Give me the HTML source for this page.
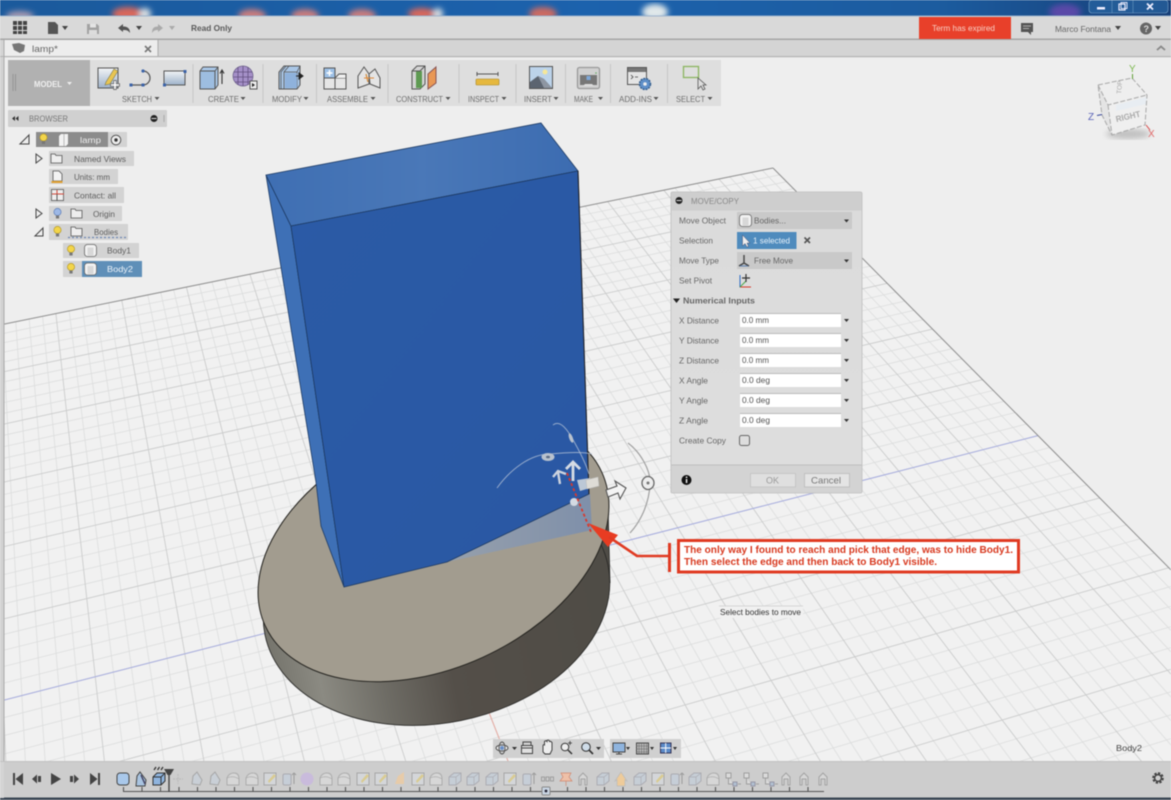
<!DOCTYPE html>
<html><head><meta charset="utf-8"><title>lamp</title>
<style>
html,body{margin:0;padding:0;width:1171px;height:800px;overflow:hidden;background:#eee}
svg{display:block;filter:blur(.42px)}
text{font-family:"Liberation Sans",sans-serif;font-size:8.5px;fill:#666}
.l{font-size:8px;fill:#6e6e6e}
.t{font-size:8.5px;fill:#5e5e5e}
.d{font-size:8.5px;fill:#666}
.v{font-size:8.5px;fill:#555}
.rd{font-size:10.5px;font-weight:bold;fill:#d8391f}
</style></head><body>
<svg id="s" xmlns="http://www.w3.org/2000/svg" width="1171" height="800" viewBox="0 0 1171 800">
<defs>
<linearGradient id="wp" x1="0" x2="1" y1="0" y2="0"><stop offset="0" stop-color="#1b5a9c"/><stop offset=".5" stop-color="#1c62ad"/><stop offset=".8" stop-color="#1c5c9f"/><stop offset="1" stop-color="#173f78"/></linearGradient>
<linearGradient id="top" x1="0" x2="1" y1="0" y2="0"><stop offset="0" stop-color="#3f6fb3"/><stop offset=".5" stop-color="#4a78b8"/><stop offset="1" stop-color="#3c6cb1"/></linearGradient>
<linearGradient id="front" x1="0" x2="1" y1="0" y2="1"><stop offset="0" stop-color="#2b5ba6"/><stop offset="1" stop-color="#2a58a4"/></linearGradient>
<linearGradient id="side" x1="265" x2="610" y1="0" y2="0" gradientUnits="userSpaceOnUse"><stop offset="0" stop-color="#77766e"/><stop offset=".12" stop-color="#8b8a82"/><stop offset=".3" stop-color="#6e6c65"/><stop offset=".5" stop-color="#544f49"/><stop offset="1" stop-color="#4f4c46"/></linearGradient>
<linearGradient id="tr" x1="447" x2="590" y1="0" y2="0" gradientUnits="userSpaceOnUse"><stop offset="0" stop-color="#97a0ac"/><stop offset="1" stop-color="#7f90aa"/></linearGradient>
<linearGradient id="btn" x1="0" x2="0" y1="0" y2="1"><stop offset="0" stop-color="#f2f4f6"/><stop offset="1" stop-color="#9eb2ca"/></linearGradient>
<linearGradient id="dlg" x1="0" x2="0" y1="0" y2="1"><stop offset="0" stop-color="#dbdbdb"/><stop offset="1" stop-color="#dedede"/></linearGradient>
<filter id="b2"><feGaussianBlur stdDeviation="3"/></filter>
<clipPath id="wc"><rect width="1171" height="16"/></clipPath>
<clipPath id="vp"><rect x="4" y="57" width="1167" height="705"/></clipPath>
<g id="bulb"><circle cx="0" cy="-1.5" r="3.6" fill="#f3d54a" stroke="#b59a2c" stroke-width=".7"/><rect x="-1.6" y="2" width="3.2" height="3" fill="#777"/></g>
<g id="bulbb"><circle cx="0" cy="-1.5" r="3.6" fill="#9db8e6" stroke="#5f7fb8" stroke-width=".7"/><rect x="-1.6" y="2" width="3.2" height="3" fill="#777"/></g>
<path id="folder" d="M0 1H4L5 2.500H11V10H0Z" fill="#eee" stroke="#555" stroke-width=".8"/>
<g id="cyl"><rect x="0" y="0" width="12" height="12" rx="3" fill="#f2f2f2" stroke="#666" stroke-width=".8"/><rect x="3" y="3" width="6" height="8" fill="#d8d8d8"/></g>
<g id="tsk" opacity=".45"><rect x="-6" y="-6" width="12" height="12" fill="#dde2e8" stroke="#777"/><path d="M-2 2L4-5 6-3-1 4Z" fill="#e8c94a"/></g>
<g id="tfil" opacity=".38"><path d="M-6 6V-1A7 7 0 0 1 1-6Q6-6 6 0V6Z" fill="#e8e8e8" stroke="#777"/><path d="M-6-1Q0-4 6 0" fill="none" stroke="#777" stroke-width=".7"/></g>
<g id="tsw" opacity=".38"><path d="M-5 5L-4-3 0-7 5 1 3 6Z" fill="#c5d4e6" stroke="#666"/></g>
<g id="tbox" opacity=".38"><path d="M-6-2L-1-6H6V2L1 6H-6Z" fill="#bcd0e6" stroke="#778"/><path d="M-6-2H1V6M1-2L6-6" fill="none" stroke="#778" stroke-width=".7"/></g>
<g id="text" opacity=".4"><rect x="-5" y="-5" width="8" height="11" rx="1.500" fill="#bcd0e6" stroke="#778"/><path d="M6 5V-6M4-4L6-6 8-4" fill="none" stroke="#555"/></g>
<g id="tj" opacity=".4"><path d="M-5 6L-5-2-1-6 3-2 3 6H1V0H-3V6Z" fill="#e4e4e4" stroke="#666"/></g>
<g id="ttr" opacity=".45"><path d="M-6-6H-1V-1H-6ZM-3.500-1V5H1" fill="#eee" stroke="#666"/><rect x="1" y="3" width="4" height="4" fill="#8fb0d8" stroke="#557"/><path d="M6 5H9" stroke="#666"/></g>
</defs>

<rect width="1171" height="800" fill="#eeeeee"/>
<g clip-path="url(#vp)">
<polygon points="773,168 1171,571 1171,762 4,762 4,324" fill="#f1f1f1"/>
<g id="grid" fill="none"></g>
<!-- lamp base -->
<polygon points="259,593 264,620 437,640 610,583 608,505 437,549" fill="url(#side)"/>
<ellipse cx="436.500" cy="600" rx="175" ry="123" transform="rotate(-11.4 436.500 600)" fill="url(#side)" stroke="#2a2a28" stroke-width=".9"/>
<path d="M264 620L259 593M610 583L608 505" stroke="#2a2a28" stroke-width=".8"/>
<ellipse cx="433.500" cy="549" rx="185" ry="119" transform="rotate(-24.5 433.500 549)" fill="#a29c8f" stroke="#24231f" stroke-width="1"/>
<polygon points="447,562 590,494 592,530" fill="url(#tr)"/>
<!-- body -->
<polygon points="266,175 291,226 344,587 321,526 316,482" fill="#3e70b6" stroke="#1d3a63" stroke-width=".8"/>
<polygon points="266,175 541,123 578,171 291,226" fill="url(#top)" stroke="#1d3a63" stroke-width=".8"/>
<polygon points="291,226 578,171 589,494 447,562 344,587" fill="url(#front)" stroke="#1d3a63" stroke-width=".8"/>
<path d="M578 171L589 494" stroke="#22242c" stroke-width="1.100" fill="none"/>
<!-- gizmo -->
<g fill="none">
<path d="M497 488C510 470 530 454 550 454 570 452 585 452 592 454" stroke="#b9c5d8" stroke-width="1" stroke-opacity=".75"/>
<path d="M553 425C558 421 564 424 572 438 580 452 586 464 589 474" stroke="#b9c5d8" stroke-width="1" stroke-opacity=".75"/>
<path d="M628 443C640 452 651 470 650 484 649 505 640 522 630 533" stroke="#a0a0a0" stroke-width="1.200"/>
</g>
<ellipse cx="548" cy="457" rx="6.500" ry="4" fill="#b9c2ce"/><ellipse cx="548" cy="457" rx="2" ry="1.300" fill="#5d6c86"/>
<ellipse cx="571" cy="438" rx="1.800" ry="5" transform="rotate(-20 571 438)" fill="#b9c2ce"/>
<path d="M573 481V463M566 469L573 462 580 469" fill="none" stroke="#d5dbe4" stroke-width="2.800"/>
<path d="M560 484L558 472M553 477L558 471 566 474" fill="none" stroke="#cdd3de" stroke-width="2.400"/>
<polygon points="577,480 590,478 590,488 580,491" fill="#bcc8d6"/>
<polygon points="586,480 598,477 599,486 587,489" fill="#dedcd6" stroke="#bbb" stroke-width=".5"/>
<circle cx="574" cy="502" r="4" fill="#d4dae2"/>
<polygon points="606,490 617,486 615,481 626,488 620,499 618,493 608,497" fill="#f4f4f4" stroke="#555" stroke-width="1.100"/>
<ellipse cx="648" cy="483" rx="6" ry="6.500" fill="#eee" stroke="#666" stroke-width="1.300"/><circle cx="648" cy="483" r="1.500" fill="#777"/>
<path d="M567 473L591 532" stroke="#d8392e" stroke-width="1.800" stroke-dasharray="3 2.500" fill="none"/>
<!-- annotation -->
<polygon points="588,523 618,535 608,547" fill="#e83c22"/>
<path d="M609 537L637 556H670" fill="none" stroke="#e03a22" stroke-width="2.600"/>
<rect x="668" y="543" width="3" height="29" fill="#e03a22"/>
<rect x="678.500" y="540.500" width="340" height="31.500" fill="#fff" stroke="#e03a22" stroke-width="3"/>
<text class="rd" x="684" y="553" textLength="329" lengthAdjust="spacingAndGlyphs">The only way I found to reach and pick that edge, was to hide Body1.</text>
<text class="rd" x="684" y="565" textLength="253" lengthAdjust="spacingAndGlyphs">Then select the edge and then back to Body1 visible.</text>
<rect x="719" y="606" width="84" height="12" fill="#f1f1f1"/><path d="M719 606H803" stroke="#ccc" stroke-width=".7"/>
<text x="720" y="615" style="font-size:8.500px;fill:#333" textLength="81" lengthAdjust="spacingAndGlyphs">Select bodies to move</text>
<text x="1116" y="751" style="font-size:8.500px;fill:#444" textLength="26" lengthAdjust="spacingAndGlyphs">Body2</text>
</g>

<!-- wallpaper -->
<g clip-path="url(#wc)">
<rect width="1171" height="16" fill="url(#wp)"/>
<g filter="url(#b2)">
<ellipse cx="20" cy="16" rx="14" ry="5" fill="#a89ab0"/>
<ellipse cx="128" cy="14" rx="16" ry="7" fill="#d9675c"/><ellipse cx="145" cy="14" rx="6" ry="6" fill="#d8dde0"/>
<ellipse cx="252" cy="16" rx="14" ry="7" fill="#c97d7e"/><ellipse cx="305" cy="16" rx="14" ry="7" fill="#c97d7e"/><ellipse cx="362" cy="16" rx="14" ry="7" fill="#c97d7e"/>
<ellipse cx="422" cy="14" rx="14" ry="6" fill="#d9675c"/><ellipse cx="438" cy="14" rx="5" ry="6" fill="#d8dde0"/>
<ellipse cx="543" cy="14" rx="14" ry="7" fill="#cc6a62"/><ellipse cx="655" cy="12" rx="13" ry="8" fill="#e0e8ea"/>
<ellipse cx="1065" cy="12" rx="16" ry="8" fill="#5a4aa8"/>
</g>
<rect x="1089" y="0" width="79" height="13" rx="3" fill="#2b6aa6" fill-opacity=".6" stroke="#7ba6cc" stroke-width=".6"/>
<path d="M1112 0V13M1133 0V13" stroke="#7ba6cc" stroke-width=".5"/>
<rect x="1097" y="7" width="8" height="2.500" fill="#eef"/>
<rect x="1119" y="4" width="6" height="6" fill="none" stroke="#eef" stroke-width="1.200"/><rect x="1121" y="2.500" width="6" height="6" fill="none" stroke="#eef" stroke-width=".9"/>
<path d="M1147 3.500L1153 9.500M1153 3.500L1147 9.500" stroke="#eef" stroke-width="1.800"/>
</g>

<!-- app bar -->
<rect x="0" y="16" width="1171" height="23" fill="#d9d9d9"/>
<rect x="0" y="15.500" width="1171" height="1" fill="#9fb4cc"/>
<rect x="0" y="38.500" width="1171" height="1.500" fill="#a5a5a5"/>
<g fill="#444"><path d="M13 21h4v4h-4zM18 21h4v4h-4zM23 21h4v4h-4zM13 26h4v4h-4zM18 26h4v4h-4zM23 26h4v4h-4zM13 31h4v3h-4zM18 31h4v3h-4zM23 31h4v3h-4z"/></g>
<path d="M48 22H55L58 25V34H48Z" fill="#555"/><path d="M62 26H68L65 30Z" fill="#444"/>
<path d="M87 24H97L99 26V34H87Z" fill="#a2a2a2"/><rect x="90" y="24" width="6" height="3.500" fill="#e4e4e4"/><rect x="89" y="30" width="8" height="4" fill="#dcdcdc"/>
<path d="M118 28L123 24V26.500C127 26.500 130 28 130 33 128 30 126 30 123 30V32Z" fill="#555"/><path d="M136 26H142L139 30Z" fill="#444"/>
<path d="M163 28L158 24V26.500C154 26.500 152 28 152 33 154 30 156 30 158 30V32Z" fill="#aaa"/><path d="M169 26H175L172 30Z" fill="#aaa"/>
<text x="191" y="31" style="font-size:8.500px;font-weight:bold;fill:#5a5a5a" textLength="41" lengthAdjust="spacingAndGlyphs">Read Only</text>
<rect x="919" y="17" width="92" height="22" fill="#e8402a"/>
<text x="932" y="31" style="font-size:8.500px;fill:#f7cdc2" textLength="63" lengthAdjust="spacingAndGlyphs">Term has expired</text>
<path d="M1021 23H1033V32H1031V35L1028 32H1021Z" fill="#555"/><path d="M1023 26H1031M1023 28.500H1029" stroke="#ccc" stroke-width=".8"/>
<text x="1055" y="32" style="font-size:8.500px;fill:#666" textLength="56" lengthAdjust="spacingAndGlyphs">Marco Fontana</text>
<path d="M1115 26H1121L1118 30Z" fill="#444"/>
<circle cx="1146" cy="28.500" r="6" fill="#666"/><text x="1143.500" y="32" style="font-size:9px;font-weight:bold;fill:#ddd">?</text>
<path d="M1155 26H1161L1158 30Z" fill="#444"/>

<!-- tab bar -->
<rect x="0" y="40" width="1171" height="16" fill="#d4d4d4"/>
<rect x="0" y="56" width="1171" height="1.200" fill="#b2b2b2"/>
<rect x="4" y="40" width="154" height="16" fill="#ededed"/>
<rect x="157.500" y="40" width="1" height="16" fill="#aaa"/>
<path d="M12 44L19 43 25 45 24 51 20 53 14 50Z" fill="#777"/>
<text x="32" y="52" style="font-size:9px;fill:#666" textLength="26" lengthAdjust="spacingAndGlyphs">lamp*</text>
<path d="M145 46L151 52M151 46L145 52" stroke="#777" stroke-width="1.600"/>
<path d="M1157 50L1161 46.500 1165 50" fill="none" stroke="#888" stroke-width="1.800"/>

<rect x="0" y="57" width="4" height="705" fill="#d2d2d2"/><rect x="3.500" y="40" width="1" height="722" fill="#aaa"/>

<!-- toolbar -->
<rect x="8" y="60" width="713" height="46" fill="#dedede"/>
<rect x="8" y="60" width="82" height="46" fill="#b1b1b1"/>
<path d="M13 74V91M15.500 74V91" stroke="#8e8e8e" stroke-width=".8"/>
<text x="34" y="87" style="font-size:8.500px;font-weight:bold;fill:#f0f0f0" textLength="28" lengthAdjust="spacingAndGlyphs">MODEL</text>
<path d="M67 82H72L69.500 85Z" fill="#eee"/>
<g stroke="#c6c6c6"><path d="M193 64V103M263 64V103M316.500 64V103M388 64V103M459 64V103M516 64V103M565.500 64V103M610.500 64V103M667.500 64V103"/></g>
<g class="labels">
<text class="l" x="122" y="102" textLength="30" lengthAdjust="spacingAndGlyphs">SKETCH</text><path d="M154.500 97H159.500L157 100Z" fill="#555"/>
<text class="l" x="208" y="102" textLength="31" lengthAdjust="spacingAndGlyphs">CREATE</text><path d="M240.500 97H245.500L243 100Z" fill="#555"/>
<text class="l" x="272" y="102" textLength="30" lengthAdjust="spacingAndGlyphs">MODIFY</text><path d="M303.500 97H308.500L306 100Z" fill="#555"/>
<text class="l" x="327" y="102" textLength="41" lengthAdjust="spacingAndGlyphs">ASSEMBLE</text><path d="M370.500 97H375.500L373 100Z" fill="#555"/>
<text class="l" x="396" y="102" textLength="47" lengthAdjust="spacingAndGlyphs">CONSTRUCT</text><path d="M445.500 97H450.500L448 100Z" fill="#555"/>
<text class="l" x="468" y="102" textLength="31" lengthAdjust="spacingAndGlyphs">INSPECT</text><path d="M501.500 97H506.500L504 100Z" fill="#555"/>
<text class="l" x="524" y="102" textLength="28" lengthAdjust="spacingAndGlyphs">INSERT</text><path d="M553.500 97H558.500L556 100Z" fill="#555"/>
<text class="l" x="574" y="102" textLength="19" lengthAdjust="spacingAndGlyphs">MAKE</text><path d="M598 97H603L600.500 100Z" fill="#555"/>
<text class="l" x="619" y="102" textLength="33" lengthAdjust="spacingAndGlyphs">ADD-INS</text><path d="M653.500 97H658.500L656 100Z" fill="#555"/>
<text class="l" x="676" y="102" textLength="29" lengthAdjust="spacingAndGlyphs">SELECT</text><path d="M707.500 97H712.500L710 100Z" fill="#555"/>
</g>
<rect x="98" y="68" width="20" height="20" fill="url(#btn)" stroke="#555"/>
<path d="M106 82L114 69 118 71 110 84 105 85Z" fill="#e8c552" stroke="#775" stroke-width=".6"/>
<path d="M115 80V90M110 85H120" stroke="#777" stroke-width="3.500"/><path d="M115 81V89M111 85H119" stroke="#fff" stroke-width="1.600"/>
<path d="M131 85H143A7 7 0 0 0 143 71" fill="none" stroke="#555" stroke-width="1.200"/>
<rect x="129.500" y="83.500" width="3" height="3" fill="#3c63a8"/><rect x="141.500" y="83.500" width="3" height="3" fill="#3c63a8"/><circle cx="143" cy="71" r="1.600" fill="#3c63a8"/>
<rect x="164" y="71" width="21" height="14" fill="url(#btn)" stroke="#555"/>
<rect x="163" y="83.500" width="3" height="3" fill="#3c63a8"/><rect x="183.500" y="70" width="3" height="3" fill="#3c63a8"/>
<path d="M203 67H218V85L215 89H200V71Z" fill="#a9c6e6" stroke="#555"/><path d="M200 71H215V89M215 71L218 67" fill="none" stroke="#555"/><rect x="200.500" y="71.500" width="14" height="17" fill="#9dbde0"/>
<path d="M222 84V71M220 73.500L222 70 224 73.500" fill="none" stroke="#333" stroke-width="1.100"/>
<circle cx="243" cy="76" r="10" fill="#a590c8" stroke="#665a86" stroke-width=".7"/>
<path d="M234 72H252M233.500 77H252.500M235 82H251M238 67V85M243 66V86M248 67V85" stroke="#63507f" stroke-width=".8"/>
<rect x="250" y="81" width="7" height="8" fill="#eee" stroke="#555"/><path d="M252 83L255 85 252 87Z" fill="#222"/>
<path d="M284 66H300V85L297 89H279V72Z" fill="#a9c6e6" stroke="#555"/><path d="M286 66L281 72V89M289 66L284 72V89M284 72H297V89M297 72L300 66" fill="none" stroke="#555" stroke-width=".8"/><path d="M285 73H297V88H285Z" fill="#8fb2dc"/>
<path d="M296 76H300M299 73L303 76 299 79Z" fill="#222" stroke="#222"/>
<rect x="324" y="68" width="11" height="10" fill="#9dc0e6" stroke="#555"/><path d="M329.500 70V76M326.500 73H332.500" stroke="#fff" stroke-width="1.500"/>
<path d="M324 78H335V89H324ZM335 78H346V89H335Z" fill="#e6e6e6" stroke="#555"/><path d="M335 78L339 74H346V78" fill="#f0f0f0" stroke="#555"/>
<path d="M358 88V76L364 67 369 74 369 84ZM369 74L375 69 380 78V88L375 86 370 84Z" fill="#e4e4e4" stroke="#555"/><path d="M366 74L368 82" stroke="#d08a3a" stroke-width="1.200"/><path d="M364 78H374" stroke="#e08a3a"/>
<path d="M412 71L417 66H425V84L420 89H412Z" fill="#d4d4d4" stroke="#555"/><rect x="416" y="71" width="6" height="17" fill="#5e9a52"/><path d="M420 71H412M420 71L425 66" stroke="#555" fill="none"/>
<path d="M428 74L436 67V83L428 89Z" fill="#e99855" stroke="#855"/>
<path d="M477 72V76M498 72V76M477 74H498" stroke="#555" stroke-width="1"/>
<rect x="476" y="79" width="23" height="6" rx="1" fill="#e6b83e" stroke="#a88524" stroke-width=".6"/>
<rect x="529.500" y="66.500" width="23" height="22" fill="#bcd3ea" stroke="#555"/>
<path d="M530 88V82L538 76 544 79 552 88Z" fill="#5c6470"/><path d="M538 76L544 88H552L544 79Z" fill="#8e96a2"/><circle cx="545" cy="72" r="2.500" fill="#f5e79a"/>
<rect x="577.500" y="67.500" width="22" height="21" rx="2" fill="#d0d0d0" stroke="#999" stroke-width="1.300"/>
<rect x="580" y="75" width="17" height="10" fill="#777"/><path d="M585 84L592 84 594 86H583Z" fill="#ddd"/><rect x="586.500" y="76" width="4" height="4" fill="#7fa8d8"/><circle cx="596" cy="73" r=".8" fill="#6a6"/>
<rect x="627.500" y="67.500" width="19" height="17" fill="#e4e4e4" stroke="#555"/><rect x="628" y="68" width="18" height="4" fill="#777"/>
<path d="M631 75L633 77 631 79M635 77H638" stroke="#444" fill="none" stroke-width=".8"/>
<circle cx="645" cy="84" r="5.500" fill="#5f8fc8" stroke="#37608f" stroke-dasharray="2 1" stroke-width="1.500"/><circle cx="645" cy="84" r="1.800" fill="#eee"/>
<rect x="683.500" y="66.500" width="15" height="11" fill="none" stroke="#8bb560" stroke-width="1.300"/>
<path d="M698 78V89L701 86 703 90 705 89 703 85H706Z" fill="#ddd" stroke="#555" stroke-width=".8"/>

<!-- browser -->
<rect x="8" y="110" width="159" height="17" rx="1" fill="#d0d0d0"/>
<path d="M12 118.500L15 116V121ZM15.500 118.500L18.500 116V121Z" fill="#333"/>
<text x="29" y="121.500" style="font-size:8.500px;fill:#777" textLength="39" lengthAdjust="spacingAndGlyphs">BROWSER</text>
<circle cx="154" cy="118.500" r="3.500" fill="#222"/><rect x="151.500" y="118" width="5" height="1" fill="#ddd"/>
<path d="M164 115V122" stroke="#aaa"/>

<path d="M20 144L29 135V144Z" fill="none" stroke="#444" stroke-width="1"/>
<rect x="36" y="132" width="91" height="15" fill="#d3d3d3"/><rect x="36" y="132" width="72" height="15" fill="#8c8c8c"/>
<use href="#bulb" x="43.500" y="139"/>
<path d="M59 136L61 134H68V144L66 146H59Z" fill="#f2f2f2"/><path d="M64 134V146" stroke="#bbb"/>
<text x="80" y="143" style="font-size:8.500px;fill:#eee" textLength="21" lengthAdjust="spacingAndGlyphs">lamp</text>
<circle cx="116" cy="140" r="4.800" fill="#eee" stroke="#444" stroke-width=".9"/><circle cx="116" cy="140" r="1.700" fill="#333"/>

<path d="M36 154V163L42 158.500Z" fill="#eee" stroke="#444"/>
<rect x="49" y="151" width="85" height="15" fill="#d3d3d3"/><use href="#folder" x="51" y="153"/>
<text class="t" x="74" y="162" textLength="52" lengthAdjust="spacingAndGlyphs">Named Views</text>
<rect x="49" y="169" width="69" height="15" fill="#d3d3d3"/>
<path d="M53 171H59L62 174V181H53Z" fill="#f3f3f3" stroke="#555" stroke-width=".8"/><rect x="51.500" y="181" width="11" height="2" fill="#e0a030"/>
<text class="t" x="74" y="180" textLength="36" lengthAdjust="spacingAndGlyphs">Units: mm</text>
<rect x="49" y="187" width="75" height="16" fill="#d3d3d3"/>
<rect x="51.500" y="189.500" width="12" height="11" fill="#eee" stroke="#555" stroke-width=".8"/><path d="M57 190V201M52 194H64" stroke="#d04a3a"/><path d="M57 194V201" stroke="#555"/>
<text class="t" x="74" y="198.500" textLength="42" lengthAdjust="spacingAndGlyphs">Contact: all</text>

<path d="M36 209V218L42 213.500Z" fill="#eee" stroke="#444"/>
<rect x="49" y="206" width="73" height="15" fill="#d3d3d3"/><use href="#bulbb" x="57.500" y="213.500"/><use href="#folder" x="71" y="208"/>
<text class="t" x="93" y="217" textLength="22" lengthAdjust="spacingAndGlyphs">Origin</text>
<path d="M35 236L43 228V236Z" fill="none" stroke="#444"/>
<rect x="49" y="224" width="79" height="16" fill="#d3d3d3"/><use href="#bulb" x="57.500" y="231.500"/><use href="#folder" x="71" y="226"/>
<text class="t" x="94" y="235" textLength="24" lengthAdjust="spacingAndGlyphs">Bodies</text>
<path d="M68 237.500H128" stroke="#6a84b0" stroke-width="1.200" stroke-dasharray="2 2"/>
<rect x="63" y="243" width="76" height="15" fill="#d3d3d3"/><use href="#bulb" x="71" y="250.500"/><use href="#cyl" x="84.500" y="244.500"/>
<text class="t" x="107" y="253.500" textLength="24" lengthAdjust="spacingAndGlyphs">Body1</text>
<rect x="63" y="261" width="20" height="16" fill="#d3d3d3"/><rect x="82" y="261" width="60" height="16" fill="#5f8fb8"/><use href="#bulb" x="71" y="268.500"/><use href="#cyl" x="84.500" y="263"/>
<text x="107" y="272" style="font-size:8.500px;fill:#eef4fa" textLength="26" lengthAdjust="spacingAndGlyphs">Body2</text>

<!-- view cube -->
<ellipse cx="1128" cy="134" rx="22" ry="5" fill="#888" opacity=".45" filter="url(#b2)"/>
<polygon points="1098,85 1132,78 1147,95 1108,105" fill="#eee"/>
<polygon points="1108,105 1147,95 1145,125 1112,135" fill="#efefef"/>
<polygon points="1098,85 1108,105 1112,135 1102,115" fill="#e4e4e4"/>
<polygon points="1116,105 1147,97 1146,104 1116,111" fill="#e8edf2"/>
<g fill="none" stroke="#a8a8a8" stroke-width="1" stroke-dasharray="5 2"><path d="M1098 85L1132 78 1147 95 1145 125 1112 135 1102 115Z"/><path d="M1098 85L1108 105 1147 95M1108 105L1112 135"/></g>
<text x="1116.500" y="122" transform="rotate(-13 1117 122)" style="font-size:8.500px;font-weight:bold;fill:#aaa" textLength="25" lengthAdjust="spacingAndGlyphs">RIGHT</text>
<text x="1121" y="94" transform="rotate(-85 1121 94)" style="font-size:6.500px;fill:#aaa">TOP</text>
<text x="1129" y="72" style="font-size:10px;fill:#7cb84e">Y</text><path d="M1132.500 74V79" stroke="#5e9e33" stroke-width="1"/>
<text x="1088" y="120" style="font-size:10px;fill:#5a63b8">Z</text><path d="M1097 115.500L1102 114.500" stroke="#334499" stroke-width="1"/>
<text x="1148" y="137" style="font-size:10px;fill:#e26a6a">X</text><path d="M1146 125L1150 130" stroke="#d84a4a"/>

<!-- dialog -->
<rect x="671" y="192" width="191" height="301" rx="1.500" fill="url(#dlg)" stroke="#bdbdbd" stroke-width=".8"/>
<rect x="671.500" y="192.500" width="190" height="18" fill="#cecece"/>
<circle cx="679" cy="200.500" r="3.500" fill="#222"/><rect x="676.500" y="200" width="5" height="1" fill="#ddd"/>
<text x="691" y="204" style="font-size:8.500px;fill:#888" textLength="48" lengthAdjust="spacingAndGlyphs">MOVE/COPY</text>
<g class="labels">
<text class="d" x="679" y="223.500" textLength="47" lengthAdjust="spacingAndGlyphs">Move Object</text>
<text class="d" x="679" y="243.500" textLength="34" lengthAdjust="spacingAndGlyphs">Selection</text>
<text class="d" x="679" y="263.500" textLength="40" lengthAdjust="spacingAndGlyphs">Move Type</text>
<text class="d" x="679" y="283.500" textLength="33" lengthAdjust="spacingAndGlyphs">Set Pivot</text>
<text x="683" y="303.500" style="font-size:8.500px;font-weight:bold;fill:#666" textLength="72" lengthAdjust="spacingAndGlyphs">Numerical Inputs</text>
<text class="d" x="679" y="323.500" textLength="40" lengthAdjust="spacingAndGlyphs">X Distance</text>
<text class="d" x="679" y="343.500" textLength="40" lengthAdjust="spacingAndGlyphs">Y Distance</text>
<text class="d" x="679" y="363.500" textLength="40" lengthAdjust="spacingAndGlyphs">Z Distance</text>
<text class="d" x="679" y="383.500" textLength="29" lengthAdjust="spacingAndGlyphs">X Angle</text>
<text class="d" x="679" y="403.500" textLength="29" lengthAdjust="spacingAndGlyphs">Y Angle</text>
<text class="d" x="679" y="423.500" textLength="29" lengthAdjust="spacingAndGlyphs">Z Angle</text>
<text class="d" x="679" y="443.500" textLength="47" lengthAdjust="spacingAndGlyphs">Create Copy</text>
</g>
<rect x="737" y="212" width="115" height="17" fill="#c9c9c9"/><use href="#cyl" x="739.500" y="214.500"/>
<text class="d" x="754" y="223.500" textLength="32" lengthAdjust="spacingAndGlyphs">Bodies...</text><path d="M844 219.500H849L846.500 222.500Z" fill="#333"/>
<rect x="737" y="232" width="59.500" height="17" fill="#4f8bbd"/>
<path d="M742.500 235V246L745 243.500 747 247 748.500 246.500 747 243H750Z" fill="#eee" stroke="#335" stroke-width=".4"/>
<text x="753" y="243.500" style="font-size:8.500px;fill:#e8f2fa" textLength="37" lengthAdjust="spacingAndGlyphs">1 selected</text>
<path d="M804.500 237.500L810 243M810 237.500L804.500 243" stroke="#555" stroke-width="1.600"/>
<rect x="737" y="252" width="115" height="17" fill="#c9c9c9"/>
<path d="M744 255V263M744 263L739 266M744 263L749 266" stroke="#444" stroke-width="1.400"/><path d="M740 266H748" stroke="#5a7fb0"/>
<text class="d" x="754" y="263.500" textLength="39" lengthAdjust="spacingAndGlyphs">Free Move</text><path d="M844 259.500H849L846.500 262.500Z" fill="#333"/>
<path d="M740 275V287H751" fill="none" stroke="#2c6ac4" stroke-width="1"/><path d="M740 287H751" stroke="#d83a2a"/><path d="M740 287L746 281" stroke="#4aa84a"/>
<path d="M746 274V282M742 278H750" stroke="#333" stroke-width="1.200"/>
<path d="M673 298.500H680L676.500 303Z" fill="#222"/>
<g fill="#fff"><rect x="740" y="314" width="101" height="13"/><rect x="740" y="334" width="101" height="13"/><rect x="740" y="354" width="101" height="13"/><rect x="740" y="374" width="101" height="13"/><rect x="740" y="394" width="101" height="13"/><rect x="740" y="414" width="101" height="13"/></g>
<g stroke="#bbb" stroke-width="1"><path d="M740 313.500H841M740 333.500H841M740 353.500H841M740 373.500H841M740 393.500H841M740 413.500H841"/></g>
<g class="vals">
<text class="v" x="742" y="323" textLength="27" lengthAdjust="spacingAndGlyphs">0.0 mm</text>
<text class="v" x="742" y="343" textLength="27" lengthAdjust="spacingAndGlyphs">0.0 mm</text>
<text class="v" x="742" y="363" textLength="27" lengthAdjust="spacingAndGlyphs">0.0 mm</text>
<text class="v" x="742" y="383" textLength="28" lengthAdjust="spacingAndGlyphs">0.0 deg</text>
<text class="v" x="742" y="403" textLength="28" lengthAdjust="spacingAndGlyphs">0.0 deg</text>
<text class="v" x="742" y="423" textLength="28" lengthAdjust="spacingAndGlyphs">0.0 deg</text>
</g>
<g fill="#333"><path d="M844 319H849L846.500 322ZM844 339H849L846.500 342ZM844 359H849L846.500 362ZM844 379H849L846.500 382ZM844 399H849L846.500 402ZM844 419H849L846.500 422Z"/></g>
<rect x="739.500" y="435.500" width="10" height="10" rx="2" fill="#ddd" stroke="#666"/>
<rect x="671.500" y="465" width="190" height="27.500" fill="#d3d3d3"/><path d="M671.500 465H861.500" stroke="#bdbdbd"/>
<circle cx="686.500" cy="480" r="5" fill="#111"/><rect x="685.800" y="479" width="1.500" height="4" fill="#eee"/><rect x="685.800" y="476.500" width="1.500" height="1.500" fill="#eee"/>
<rect x="750.500" y="473.500" width="45" height="13.500" fill="#dfdfdf" stroke="#c6c6c6"/><rect x="804.500" y="473.500" width="45" height="13.500" fill="#e4e4e4" stroke="#c0c0c0"/>
<text x="766" y="483.500" style="font-size:9.500px;fill:#9a9a9a" textLength="13" lengthAdjust="spacingAndGlyphs">OK</text>
<text x="811" y="483.500" style="font-size:9.500px;fill:#777" textLength="30" lengthAdjust="spacingAndGlyphs">Cancel</text>

<!-- nav bar -->
<rect x="493" y="739" width="111" height="19" fill="#d0d0d0"/><rect x="610" y="739" width="71" height="19" fill="#d0d0d0"/>
<ellipse cx="502" cy="748" rx="6" ry="3" fill="#eee" stroke="#555"/><ellipse cx="502" cy="748" rx="3" ry="6" fill="none" stroke="#555"/><circle cx="502" cy="748" r="2" fill="#6a8fc8"/>
<path d="M512 747H517L514.500 750Z" fill="#333"/>
<rect x="521.500" y="745.500" width="11" height="8" fill="#e0e0e0" stroke="#444"/><path d="M523 745V742H531V745" fill="none" stroke="#444"/><path d="M521.500 748H532.500" stroke="#444"/>
<path d="M543 752V746Q543 744 544.500 745V741.500Q546 740 547 741.500V740.500Q548.500 739.500 549.500 741V741.500Q551 741 552 742.500V750L550 754H545Z" fill="#eee" stroke="#333" stroke-width=".9"/>
<circle cx="565" cy="747" r="3.800" fill="#eee" stroke="#333"/><path d="M568 750L572 754" stroke="#333" stroke-width="1.500"/><path d="M570 741V745M568 743H572" stroke="#333" stroke-width=".8"/>
<circle cx="586" cy="747" r="4.300" fill="#cfdce8" stroke="#333"/><path d="M589 750L593 754" stroke="#333" stroke-width="1.700"/>
<path d="M596 747H601L598.500 750Z" fill="#333"/>
<rect x="613" y="743" width="12" height="9" fill="#8fb4de" stroke="#444"/><path d="M616 754H622M619 752V754" stroke="#444"/>
<path d="M626 747H630L628 750Z" fill="#333"/>
<rect x="636.500" y="743" width="12" height="11" fill="#bbb" stroke="#444"/><path d="M639 743V754M641.500 743V754M644 743V754M646.500 743V754M636 746H649M636 749H649M636 752H649" stroke="#666" stroke-width=".6"/>
<path d="M650 747H654L652 750Z" fill="#333"/>
<rect x="660.500" y="743" width="10.500" height="10" fill="#5a8ac8" stroke="#335"/><path d="M665.700 743V753M660.500 748H671" stroke="#fff"/>
<path d="M673 747H677L675 750Z" fill="#333"/>

<!-- timeline -->
<rect x="0" y="762" width="1171" height="36" fill="#cdcdcd"/>
<rect x="0" y="761" width="1171" height="1" fill="#c2c2c2"/>
<rect x="0" y="797.500" width="1171" height="2.500" fill="#3a4654"/>
<rect x="0" y="762" width="4" height="36" fill="#d4d4d4"/>
<g fill="#444">
<path d="M13 773H15V785H13ZM23 773V785L15.500 779Z"/>
<path d="M32 779L37 774.500V783.500ZM38 776H41V782H38Z"/>
<path d="M51 773L61 779 51 785Z"/>
<path d="M70 776H73V782H70ZM74 774.500L79 779 74 783.500Z"/>
<path d="M90 773L97.500 779 90 785ZM98 773H100V785H98Z"/>
</g>
<rect x="117" y="773" width="12" height="12" rx="3" fill="#a9c8ea" stroke="#444"/>
<path d="M136 786L137 776 140 772 146 780 145 786Z" fill="#a9c4e0" stroke="#444"/><path d="M141 775L145 784" stroke="#446" stroke-width="1.500"/>
<path d="M153 777L157 773H165V781L161 785H153Z" fill="#8fb4de" stroke="#333"/><path d="M153 777H161V785M161 777L165 773" fill="none" stroke="#333"/>
<path d="M154 770L156 767M157.500 770L159.500 767M161 770L163 767" stroke="#333" stroke-width="1.300"/>
<path d="M178 774V784M173 779H183" stroke="#bbb" stroke-width="1.200" fill="none" stroke-dasharray="2 1"/>
<use href="#tsw" x="197" y="779"/><use href="#tsw" x="215" y="779"/>
<use href="#tfil" x="233" y="779"/><use href="#tfil" x="252" y="779"/>
<use href="#tsk" x="270" y="779"/><use href="#text" x="288" y="779"/>
<circle cx="307" cy="779" r="6.500" fill="#c8b6e0" opacity=".8"/>
<use href="#tfil" x="326" y="779"/><use href="#tfil" x="344" y="779"/>
<use href="#tsk" x="363" y="779"/><use href="#tsk" x="381" y="779"/>
<path d="M395 784L398 776 404 772V784Z" fill="#eecaa0" opacity=".8"/>
<use href="#tsk" x="418" y="779"/><use href="#tfil" x="436" y="779"/>
<use href="#tbox" x="455" y="779"/><use href="#tbox" x="473" y="779"/><use href="#tbox" x="492" y="779"/>
<use href="#tsk" x="510" y="779"/><use href="#text" x="528" y="779"/>
<g fill="none" stroke="#999" stroke-width=".9"><rect x="541.500" y="777" width="3" height="4"/><rect x="546" y="777" width="3" height="4"/><rect x="550.500" y="777" width="3" height="4"/></g>
<path d="M561 773H571L569 777 572 781H560L563 777ZM566 781V786" fill="#eec0a8" stroke="#d08870" stroke-width=".7"/>
<use href="#tj" x="584" y="779"/><use href="#tbox" x="603" y="779"/>
<path d="M617 786V780L615 781 621 772 627 781 625 780V786Z" fill="#eecb9a" stroke="#bbb" stroke-width=".7"/>
<use href="#tbox" x="640" y="779"/><use href="#tsk" x="658" y="779"/><use href="#text" x="676" y="779"/>
<use href="#tbox" x="695" y="779"/><use href="#tfil" x="713" y="779"/>
<use href="#ttr" x="732" y="779"/><use href="#ttr" x="750" y="779"/><use href="#ttr" x="769" y="779"/>
<use href="#tj" x="787" y="779"/><use href="#tj" x="805" y="779"/><use href="#tj" x="824" y="779"/>
<path d="M123 791.500H824" stroke="#555" stroke-width="1.100"/>
<g id="ticks" stroke="#555" stroke-width="1.100"></g>
<path d="M164 769H174L170.500 775H167.500Z" fill="#444"/><path d="M169 774V792" stroke="#444" stroke-width="1.400"/>
<rect x="542" y="787" width="8" height="8" rx="1" fill="#c8d4e2" stroke="#888"/><circle cx="546" cy="791" r="1.400" fill="#223"/>
<circle cx="1158" cy="778" r="4.500" fill="none" stroke="#444" stroke-width="2.600" stroke-dasharray="2.200 1.300"/><circle cx="1158" cy="778" r="3.400" fill="none" stroke="#444" stroke-width="1.500"/>
</svg>
<script>
(function(){
var NS="http://www.w3.org/2000/svg",g=document.getElementById("grid");
var A=[773,168],V1=[7128,-1122],V2=[-50,-663],dt=.2436/30,ds=.0676/40;
var X0=4,Y0=57,X1=1171,Y1=762;
function P(s,t){var w=1-s-t;return[(A[0]-t*V2[0]-s*V1[0])/w,(A[1]-t*V2[1]-s*V1[1])/w];}
function clip(a,b){var t0=0,t1=1,dx=b[0]-a[0],dy=b[1]-a[1],p=[-dx,dx,-dy,dy],q=[a[0]-X0,X1-a[0],a[1]-Y0,Y1-a[1]];
for(var k=0;k<4;k++){if(p[k]===0){if(q[k]<0)return null;}else{var r=q[k]/p[k];if(p[k]<0){if(r>t1)return null;if(r>t0)t0=r;}else{if(r<t0)return null;if(r<t1)t1=r;}}}
return[[a[0]+t0*dx,a[1]+t0*dy],[a[0]+t1*dx,a[1]+t1*dy]];}
function line(a,b,c,w){var r=clip(a,b);if(!r)return;var l=document.createElementNS(NS,"line");l.setAttribute("x1",r[0][0].toFixed(1));l.setAttribute("y1",r[0][1].toFixed(1));l.setAttribute("x2",r[1][0].toFixed(1));l.setAttribute("y2",r[1][1].toFixed(1));l.setAttribute("stroke",c);l.setAttribute("stroke-width",w);g.appendChild(l);}
var smax=80*ds,tmax=50*dt,i;
for(i=1;i<=50;i++){if(i%5)line(P(0,i*dt),P(smax,i*dt),"#dcdddd",.8);}
for(i=1;i<=80;i++){if(i%5)line(P(i*ds,0),P(i*ds,tmax),"#dcdddd",.8);}
for(i=5;i<=50;i+=5){line(P(0,i*dt),P(smax,i*dt),"#cbcccc",.9);}
for(i=5;i<=80;i+=5){line(P(i*ds,0),P(i*ds,tmax),"#cbcccc",.9);}
line(P(0,.2436),P(smax,.2436),"#a8aee0",1);
line(P(.0676,.18),P(.0676,tmax),"#e6a9a0",1);
line(P(0,0),P(smax,0),"#8e8e8e",1);
line(P(0,0),P(0,tmax),"#8e8e8e",1);
var tk=document.getElementById("ticks"),x;
for(x=123.5;x<825;x+=18.5){var l=document.createElementNS(NS,"line");l.setAttribute("x1",x);l.setAttribute("x2",x);l.setAttribute("y1",787);l.setAttribute("y2",791);tk.appendChild(l);}
})();
</script>
</body></html>
